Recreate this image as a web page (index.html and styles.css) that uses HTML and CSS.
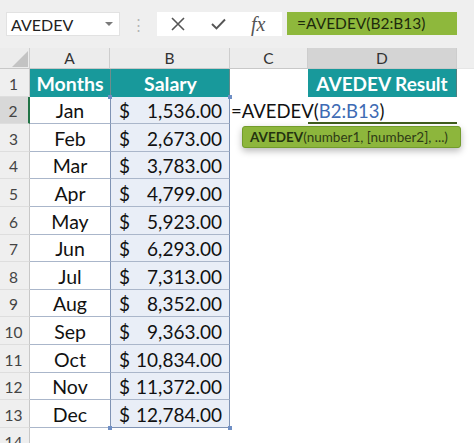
FILE: index.html
```html
<!DOCTYPE html>
<html>
<head>
<meta charset="utf-8">
<link rel="stylesheet" href="styles.css">
</head>
<body>
<div class="toolbar">
  <div class="namebox"><span class="nb-text">AVEDEV</span><span class="nb-arrow"></span></div>
  <div class="sep">⋮</div>
  <div class="tools">
    <svg class="ic-x" width="14" height="14" viewBox="0 0 14 14"><path d="M1 1 L13 13 M13 1 L1 13" stroke="#555" stroke-width="1.6" fill="none"/></svg>
    <svg class="ic-check" width="15" height="12" viewBox="0 0 15 12"><path d="M1 6 L5.5 10.5 L14 1.5" stroke="#555" stroke-width="1.9" fill="none"/></svg>
    <span class="ic-fx">fx</span>
  </div>
  <div class="formula">=AVEDEV(B2:B13)</div>
</div>

<div class="sheet">
  <div class="corner"><svg width="30" height="21" viewBox="0 0 30 21"><polygon points="12,19 28,19 28,3" fill="#c3c3c3"/></svg></div>
  <div class="colhead">A</div>
  <div class="colhead">B</div>
  <div class="colhead">C</div>
  <div class="colhead sel">D</div>
  <div class="colhead rest"></div>

  <div class="rowhead">1</div>
  <div class="cell hdr a">Months</div>
  <div class="cell hdr b">Salary</div>
  <div class="cell c"></div>
  <div class="cell hdr d">AVEDEV Result</div>
  <div class="cell e"></div>

  <div class="rowhead sel">2</div>
  <div class="cell a">Jan</div>
  <div class="cell b first"><span>$</span><span>1,536.00</span></div>
  <div class="cell c formula-cell">=AVED<span class="caret"></span>EV(<span class="ref">B2:B13</span>)</div>
  <div class="cell d active"></div>
  <div class="cell e"></div>

  <div class="rowhead">3</div><div class="cell a">Feb</div><div class="cell b"><span>$</span><span>2,673.00</span></div><div class="cell c"></div><div class="cell d"></div><div class="cell e"></div>
  <div class="rowhead">4</div><div class="cell a">Mar</div><div class="cell b"><span>$</span><span>3,783.00</span></div><div class="cell c"></div><div class="cell d"></div><div class="cell e"></div>
  <div class="rowhead">5</div><div class="cell a">Apr</div><div class="cell b"><span>$</span><span>4,799.00</span></div><div class="cell c"></div><div class="cell d"></div><div class="cell e"></div>
  <div class="rowhead">6</div><div class="cell a">May</div><div class="cell b"><span>$</span><span>5,923.00</span></div><div class="cell c"></div><div class="cell d"></div><div class="cell e"></div>
  <div class="rowhead">7</div><div class="cell a">Jun</div><div class="cell b"><span>$</span><span>6,293.00</span></div><div class="cell c"></div><div class="cell d"></div><div class="cell e"></div>
  <div class="rowhead">8</div><div class="cell a">Jul</div><div class="cell b"><span>$</span><span>7,313.00</span></div><div class="cell c"></div><div class="cell d"></div><div class="cell e"></div>
  <div class="rowhead">9</div><div class="cell a">Aug</div><div class="cell b"><span>$</span><span>8,352.00</span></div><div class="cell c"></div><div class="cell d"></div><div class="cell e"></div>
  <div class="rowhead">10</div><div class="cell a">Sep</div><div class="cell b"><span>$</span><span>9,363.00</span></div><div class="cell c"></div><div class="cell d"></div><div class="cell e"></div>
  <div class="rowhead">11</div><div class="cell a">Oct</div><div class="cell b"><span>$</span><span>10,834.00</span></div><div class="cell c"></div><div class="cell d"></div><div class="cell e"></div>
  <div class="rowhead">12</div><div class="cell a">Nov</div><div class="cell b"><span>$</span><span>11,372.00</span></div><div class="cell c"></div><div class="cell d"></div><div class="cell e"></div>
  <div class="rowhead">13</div><div class="cell a">Dec</div><div class="cell b last"><span>$</span><span>12,784.00</span></div><div class="cell c"></div><div class="cell d"></div><div class="cell e"></div>
  <div class="rowhead">14</div><div class="cell blank"></div><div class="cell blank"></div><div class="cell blank"></div><div class="cell blank"></div><div class="cell blank"></div>

  <span class="handle h-tl"></span>
  <span class="handle h-tr"></span>
  <span class="handle h-bl"></span>
  <span class="handle h-br"></span>

  <div class="tooltip"><b>AVEDEV</b>(number1, [number2], ...)</div>
</div>
</body>
</html>
```

FILE: styles.css
```css
* { box-sizing: border-box; }
html, body {
  margin: 0;
  padding: 0;
  width: 474px;
  height: 443px;
  overflow: hidden;
  background: #ffffff;
  font-family: Lato, "Noto Sans", "Liberation Sans", sans-serif;
  color: #111;
}

.toolbar {
  height: 48px;
  background: #efefef;
  display: flex;
  align-items: flex-start;
  padding: 12px 0 0 6px;
}
.namebox {
  width: 114px;
  height: 24px;
  background: #fff;
  border: 1px solid #e2e2e2;
  display: flex;
  align-items: center;
  justify-content: space-between;
  padding: 0 6px 0 4px;
  font-size: 16px;
  color: #222;
}
.nb-arrow {
  width: 0;
  height: 0;
  border-left: 4px solid transparent;
  border-right: 4px solid transparent;
  border-top: 4px solid #7a7a7a;
}
.sep {
  width: 37px;
  text-align: center;
  color: #b5b5b5;
  font-size: 15px;
  line-height: 24px;
}
.tools {
  width: 125px;
  height: 24px;
  background: #fff;
  display: flex;
  align-items: center;
  padding-left: 14px;
}
.ic-x { margin-right: 26px; }
.ic-check { margin-right: 25px; }
.ic-fx {
  font-family: "Liberation Serif", serif;
  font-style: italic;
  font-size: 20px;
  color: #555;
  line-height: 24px;
}
.formula {
  margin-left: 5px;
  width: 170px;
  height: 23px;
  background: #8eb83c;
  color: #1d2a0c;
  font-size: 15.5px;
  line-height: 23px;
  padding-left: 10px;
}

.sheet {
  position: relative;
  display: grid;
  grid-template-columns: 30px 80px 120px 78px 149px 1fr;
  grid-template-rows: 21px repeat(14, 27.6px);
}
.corner {
  background: #ececec;
  border-right: 1px solid #cfcfcf;
  border-bottom: 1px solid #c8c8c8;
}
.corner svg { display: block; }
.colhead {
  background: #ececec;
  border-right: 1px solid #cdcdcd;
  border-bottom: 1px solid #c8c8c8;
  text-align: center;
  font-size: 15.5px;
  line-height: 21px;
  color: #333;
}
.colhead.sel { background: #d4d4d4; }
.colhead.rest { background: #efefef; border-right: none; border-bottom: 1px solid #e6e6e6; }

.rowhead {
  background: #efefef;
  border-right: 1px solid #c8c8c8;
  border-bottom: 1px solid #dedede;
  font-size: 15.5px;
  color: #444;
  display: flex;
  align-items: flex-end;
  justify-content: center;
  padding-bottom: 3px;
  padding-right: 2px;
}
.rowhead.sel {
  background: #d8d8d8;
  border-right: 2px solid #217346;
}

.cell {
  font-size: 19.5px;
  display: flex;
  align-items: flex-end;
  padding-bottom: 1px;
  white-space: nowrap;
}
.cell.a {
  justify-content: center;
  border-bottom: 1px solid #aab6ca;
}
.cell.b {
  font-size: 19px;
  background: #e9eef7;
  border-left: 1px solid #7f93b4;
  border-right: 1px solid #7f93b4;
  border-bottom: 1px solid #aab6ca;
  justify-content: space-between;
  gap: 4px;
  padding-left: 8px;
  padding-right: 7px;
}
.cell.b.last { border-bottom: 1px solid #7f93b4; }
.cell.hdr {
  background: #18999b;
  color: #fff;
  font-weight: bold;
  font-size: 19.5px;
  justify-content: center;
  padding-bottom: 2px;
}
.cell.hdr.b { border-left: 1px solid #6f8c8c; border-right: 1px solid #5f8a8a; border-bottom: none; }
.cell.hdr.a { border-bottom: none; }
.cell.hdr.d { border-right: 1px solid #4f7f7f; font-size: 19px; }
.cell.d.active { border-bottom: 2px solid #3f5d1c; }

.formula-cell {
  overflow: visible;
  position: relative;
  z-index: 1;
  font-size: 18.5px;
  padding-left: 1px;
  padding-bottom: 2px;
}
.caret {
  display: inline-block;
  width: 1px;
  height: 27px;
  background: #777;
  align-self: flex-end;
  margin-bottom: -2px;
}
.ref { color: #3e6bb4; }

.handle {
  position: absolute;
  width: 4px;
  height: 4px;
  background: #6f8fc5;
  z-index: 2;
}
.h-tl { left: 108px; top: 47px; }
.h-tr { left: 228px; top: 47px; }
.h-bl { left: 108px; top: 378px; }
.h-br { left: 228px; top: 378px; }

.tooltip {
  position: absolute;
  left: 242px;
  top: 78px;
  width: 219px;
  height: 22px;
  background: #8db63c;
  border: 1px solid #739c2c;
  border-radius: 3px;
  box-shadow: 0 3px 7px rgba(0, 0, 0, 0.28);
  font-size: 13.5px;
  line-height: 20px;
  color: #2d3b16;
  padding-left: 7px;
  white-space: nowrap;
  z-index: 3;
}
.tooltip b { color: #243210; }
```
